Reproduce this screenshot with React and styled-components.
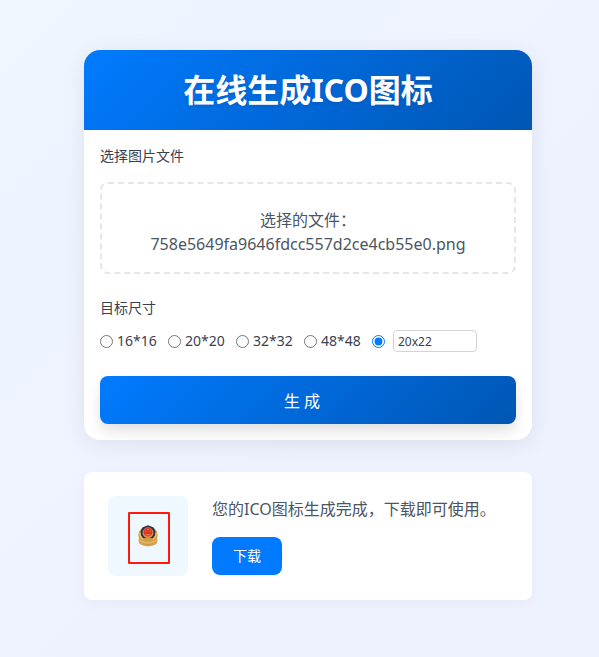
import React, { useState } from 'react';
import styled, { createGlobalStyle } from 'styled-components';

const SIZES = ['16*16', '20*20', '32*32', '48*48'];

export default function App() {
  const [size, setSize] = useState('custom');
  const [custom, setCustom] = useState('20x22');

  return (
    <>
      <GlobalStyle />
      <Page>
        <Card>
          <Header>
            <h1>在线生成ICO图标</h1>
          </Header>
          <Form onSubmit={e => e.preventDefault()}>
            <FieldTitle as="label" htmlFor="file">
              选择图片文件
            </FieldTitle>
            <DropZone htmlFor="file">
              <span>选择的文件：</span>
              <span>758e5649fa9646fdcc557d2ce4cb55e0.png</span>
              <HiddenFile id="file" type="file" accept="image/*" />
            </DropZone>
            <Sizes>
              <FieldTitle as="legend">目标尺寸</FieldTitle>
              <SizeRow>
                {SIZES.map(item => (
                  <SizeOption key={item}>
                    <Radio
                      name="size"
                      value={item}
                      checked={size === item}
                      onChange={() => setSize(item)}
                    />
                    {item}
                  </SizeOption>
                ))}
                <CustomOption>
                  <Radio
                    name="size"
                    value="custom"
                    aria-label="自定义尺寸"
                    checked={size === 'custom'}
                    onChange={() => setSize('custom')}
                  />
                  <CustomInput
                    type="text"
                    aria-label="自定义尺寸"
                    value={custom}
                    onChange={e => setCustom(e.target.value)}
                  />
                </CustomOption>
              </SizeRow>
            </Sizes>
            <SubmitButton type="submit">生 成</SubmitButton>
          </Form>
        </Card>

        <Result>
          <Preview>
            <Emblem />
            <Frame />
          </Preview>
          <ResultInfo>
            <p>您的ICO图标生成完成，下载即可使用。</p>
            <DownloadButton type="button">下载</DownloadButton>
          </ResultInfo>
        </Result>
      </Page>
    </>
  );
}

const Emblem = () => (
  <svg width="20" height="22" viewBox="0 0 20 22" aria-hidden="true">
    <path
      d="M3 4 1 6.5 0.3 10 0.8 13 0.5 16 1.6 19 5 20.4 10 21.6 15 20.4 18.4 19 19.5 16 19.2 13 19.7 10 19 6.5 17 4Z"
      fill="#dba550"
    />
    <path
      d="M1.5 8 3 12 5.5 15M18.5 8 17 12 14.5 15"
      fill="none"
      stroke="#e9bf74"
    />
    <path
      d="M10 0.3 12.6 1.3 16 2.8 17.4 6.5 16.8 10.5 14.6 13.6 10 14.6 5.4 13.6 3.2 10.5 2.6 6.5 4 2.8 7.4 1.3Z"
      fill="#2b344a"
    />
    <circle cx="10" cy="7.7" r="5.4" fill="#dc9a4e" />
    <circle cx="10" cy="7.2" r="4.4" fill="#dc3528" />
    <path
      d="M7.2 6.2h1.2M9.2 4.4h1.6M11.6 6.2h1.2"
      stroke="#f09a50"
      opacity="0.8"
    />
    <path d="M7.4 9.8h5.2" stroke="#ec8d48" />
    <path d="M4.5 13.4 10 12.4 15.5 13.4 13 16 10 17 7 16Z" fill="#d39a45" />
    <path
      d="M2.5 16 6 17.2 10 18 14 17.2 17.5 16"
      fill="none"
      stroke="#e9bf74"
      strokeWidth="0.8"
    />
    <path
      d="M4 19 7 19.2 10 20 13 19.2 16 19"
      fill="none"
      stroke="#c8924a"
      strokeWidth="0.8"
    />
  </svg>
);

const GlobalStyle = createGlobalStyle`
  * {
    box-sizing: border-box;
    margin: 0;
    padding: 0;
  }

  body {
    min-height: 100vh;
    background: linear-gradient(135deg, #eff6ff, #eef2ff 60%);
    color: #374151;
    font-family: 'Noto Sans', 'Noto Sans CJK SC', sans-serif;
    font-size: 16px;
    line-height: 24px;
  }

  button,
  input {
    font-family: inherit;
  }
`;

const Page = styled.main`
  padding: 50px 0 56px 17px;
  display: flex;
  flex-direction: column;
  align-items: center;
  gap: 32px;
`;

const Card = styled.section`
  width: 100%;
  max-width: 448px;
  border-radius: 16px;
  background: #ffffff;
  box-shadow: 0 4px 24px rgba(0, 0, 0, 0.08);
  overflow: hidden;
`;

const Header = styled.header`
  padding: 20px 16px;
  background: linear-gradient(135deg, #007bff, #0056b3);
  color: #ffffff;
  text-align: center;

  h1 {
    font-size: 32px;
    line-height: 40px;
    font-weight: 700;
    text-shadow: 0 2px 4px rgba(0, 0, 0, 0.1);
  }
`;

const Form = styled.form`
  padding: 16px;
  display: flex;
  flex-direction: column;
`;

const FieldTitle = styled.div`
  display: block;
  font-size: 14px;
  line-height: 20px;
`;

const DropZone = styled.label`
  margin: 16px 0 24px;
  padding: 24px 16px 16px;
  display: flex;
  flex-direction: column;
  align-items: center;
  border: 2px dashed #e5e7eb;
  border-radius: 8px;
  color: #4b5563;
  cursor: pointer;
`;

const HiddenFile = styled.input`
  position: absolute;
  width: 1px;
  height: 1px;
  opacity: 0;
`;

const Sizes = styled.fieldset`
  border: 0;
`;

const SizeRow = styled.div`
  margin-top: 12px;
  display: flex;
  flex-wrap: wrap;
  align-items: center;
  gap: 11px;
`;

const SizeOption = styled.label`
  flex: 0 0 57px;
  display: flex;
  align-items: center;
  gap: 4px;
  font-size: 14px;
  line-height: 20px;
`;

const CustomOption = styled.div`
  display: flex;
  align-items: center;
  gap: 8px;
`;

const Radio = styled.input.attrs({ type: 'radio' })`
  width: 13px;
  height: 13px;
  flex-shrink: 0;
  accent-color: #007bff;
`;

const CustomInput = styled.input`
  width: 84px;
  height: 22px;
  padding: 0 4px;
  border: 1px solid #d1d5db;
  border-radius: 4px;
  background: #ffffff;
  color: #374151;
  font-size: 12px;
`;

const SubmitButton = styled.button`
  height: 48px;
  margin-top: 24px;
  padding-right: 12px;
  border: 0;
  border-radius: 8px;
  background: linear-gradient(135deg, #007bff, #0056b3);
  box-shadow: 0 8px 16px -2px rgba(0, 0, 0, 0.14);
  color: #ffffff;
  font-size: 16px;
  cursor: pointer;
`;

const Result = styled.section`
  width: 100%;
  max-width: 448px;
  padding: 24px;
  display: flex;
  align-items: center;
  gap: 24px;
  border-radius: 8px;
  background: #ffffff;
  box-shadow: 0 4px 16px rgba(0, 0, 0, 0.03);
`;

const Preview = styled.div`
  width: 80px;
  height: 80px;
  display: flex;
  justify-content: center;
  align-items: center;
  flex-shrink: 0;
  position: relative;
  border-radius: 8px;
  background: #f0f8ff;
`;

const Frame = styled.span`
  position: absolute;
  inset: 16px 18px 12px 20px;
  border: 2px solid #ff1a0d;
  border-radius: 1px;
`;

const ResultInfo = styled.div`
  display: flex;
  flex-direction: column;
  align-items: flex-start;
  gap: 16px;
  color: #4b5563;
`;

const DownloadButton = styled.button`
  padding: 9px 21px;
  border: 0;
  border-radius: 8px;
  background: #007bff;
  color: #ffffff;
  font-size: 14px;
  line-height: 20px;
  cursor: pointer;
`;
